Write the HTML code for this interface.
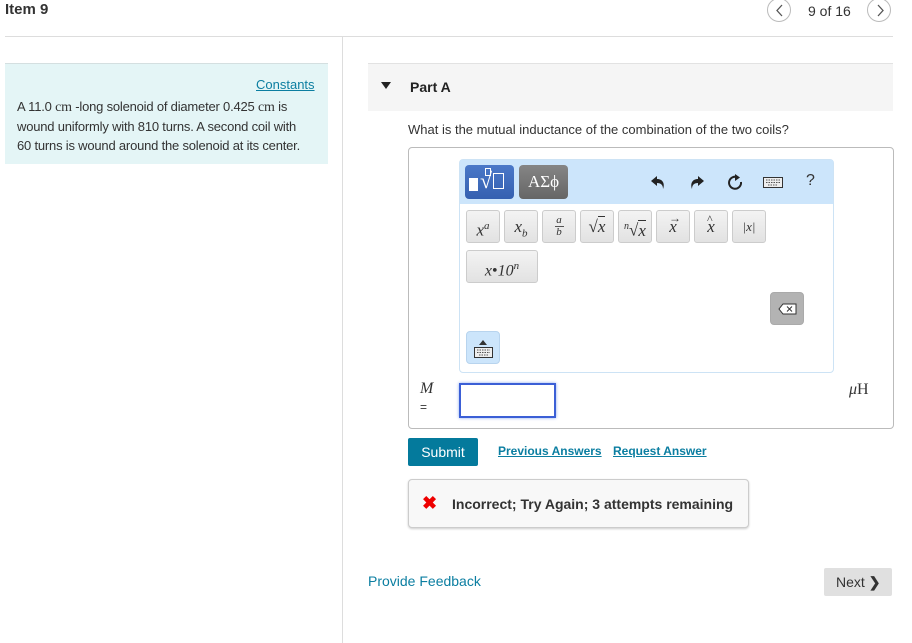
<!DOCTYPE html>
<html><head><style>
*{box-sizing:border-box;margin:0;padding:0}
body{width:912px;height:643px;background:#fff;font-family:"Liberation Sans",Arial,sans-serif;color:#222;position:relative;overflow:hidden;font-size:13px}
.a{position:absolute}
.circ{position:absolute;width:24px;height:24px;border:1px solid #bbb;border-radius:50%;top:-2px}
.tb{position:absolute;top:210px;width:34px;height:33px;background:linear-gradient(#f3f3f3,#e2e2e2);border:1px solid #ccc;border-radius:3px;font-family:"Liberation Serif",serif;font-style:italic;font-size:17px;text-align:center;line-height:31px;color:#333}
.ico{position:absolute;top:173px}
.link{color:#0b7ea1;text-decoration:underline;font-weight:bold;font-size:12px}
</style></head><body>
<div class="a" style="left:5px;top:1px;font-weight:bold;font-size:15px;color:#333">Item 9</div>
<div class="circ" style="left:767px"><svg class="a" style="left:7px;top:5px" width="9" height="13" viewBox="0 0 9 13"><path d="M7 1 L2 6.5 L7 12" fill="none" stroke="#555" stroke-width="1.3"/></svg></div>
<div class="a" style="left:808px;top:3px;font-size:14px;color:#333">9 of 16</div>
<div class="circ" style="left:867px"><svg class="a" style="left:8px;top:5px" width="9" height="13" viewBox="0 0 9 13"><path d="M2 1 L7 6.5 L2 12" fill="none" stroke="#555" stroke-width="1.3"/></svg></div>
<div class="a" style="left:5px;top:36px;width:888px;height:1px;background:#ddd"></div>
<div class="a" style="left:342px;top:37px;width:1px;height:606px;background:#ddd"></div>

<div class="a" style="left:5px;top:63px;width:323px;height:101px;background:#e4f5f6;border-top:1px solid #d4dfe0"></div>
<div class="a" style="left:256px;top:77px;color:#0b7ea1;text-decoration:underline;font-size:13px">Constants</div>
<div class="a" style="left:17px;top:97px;width:310px;line-height:19px;font-size:13px;color:#333;letter-spacing:-0.2px;white-space:nowrap">A 11.0 <span style="font-family:'Liberation Serif',serif;font-size:14px">cm</span> -long solenoid of diameter 0.425 <span style="font-family:'Liberation Serif',serif;font-size:14px">cm</span> is<br>wound uniformly with 810 turns. A second coil with<br>60 turns is wound around the solenoid at its center.</div>

<div class="a" style="left:368px;top:63px;width:525px;height:48px;background:#f5f5f5;border-top:1px solid #e2e2e2"></div>
<div class="a" style="left:381px;top:82px;width:0;height:0;border-left:5px solid transparent;border-right:5px solid transparent;border-top:7px solid #222"></div>
<div class="a" style="left:410px;top:79px;font-weight:bold;font-size:14px">Part A</div>
<div class="a" style="left:408px;top:122px;font-size:13px;color:#333">What is the mutual inductance of the combination of the two coils?</div>

<div class="a" style="left:408px;top:147px;width:486px;height:282px;border:1px solid #bbb;border-radius:4px"></div>
<div class="a" style="left:459px;top:159px;width:375px;height:214px;border:1px solid #cde3f5;border-radius:4px;background:#fff"></div>
<div class="a" style="left:460px;top:160px;width:373px;height:44px;background:#cce5fb"></div>
<div class="a" style="left:465px;top:165px;width:49px;height:34px;background:linear-gradient(#4a78c8,#3560b0);border-radius:4px;color:#fff">
<div class="a" style="left:4px;top:13px;width:9px;height:13px;background:#fff"></div>
<div class="a" style="left:15px;top:3px;font-family:'Liberation Serif',serif;font-size:22px">&#x221A;</div>
<div class="a" style="left:28px;top:8px;width:11px;height:16px;border:1.5px solid #fff"></div>
<div class="a" style="left:20px;top:3px;width:6px;height:8px;border:1.2px solid #fff"></div>
</div>
<div class="a" style="left:519px;top:165px;width:49px;height:34px;background:linear-gradient(#858585,#666);border-radius:4px;color:#fff;font-family:'Liberation Serif',serif;font-size:17px;text-align:center;line-height:33px">ΑΣϕ</div>
<svg class="ico" style="left:650px" width="16" height="18" viewBox="0 0 16 18"><path d="M7 3 L1 8 L7 13 V10 C11 10 13 12 13 16 C15 11 13 6 7 6 Z" fill="#222"/></svg>
<svg class="ico" style="left:689px" width="16" height="18" viewBox="0 0 16 18"><path d="M9 3 L15 8 L9 13 V10 C5 10 3 12 3 16 C1 11 3 6 9 6 Z" fill="#222"/></svg>
<svg class="ico" style="left:726px" width="18" height="18" viewBox="0 0 18 18"><path d="M12 4.5 A6 6 0 1 0 15 9" fill="none" stroke="#222" stroke-width="2"/><path d="M9 1 L14 4.5 L9 8 Z" fill="#222"/></svg>
<svg class="ico" style="left:763px;top:177px" width="20" height="11" viewBox="0 0 20 11"><rect x="0.5" y="0.5" width="19" height="10" fill="#eee" stroke="#333"/><path d="M3 3h14M3 5.5h14M5 8h10" stroke="#555" stroke-dasharray="1.5 1"/></svg>
<div class="a" style="left:806px;top:172px;font-size:16px;color:#333">?</div>

<div class="tb" style="left:466px">x<sup style="font-size:11px">a</sup></div>
<div class="tb" style="left:504px">x<sub style="font-size:11px">b</sub></div>
<div class="tb" style="left:542px;font-size:11px;line-height:11px;padding-top:4px">a<br><span style="display:inline-block;border-top:1px solid #555;width:9px">b</span></div>
<div class="tb" style="left:580px;font-style:normal">√<i style="border-top:1px solid #333;line-height:16px">x</i></div>
<div class="tb" style="left:618px;font-style:normal"><sup style="font-size:10px;font-style:italic">n</sup>√<i style="border-top:1px solid #333;line-height:16px">x</i></div>
<div class="tb" style="left:656px">x<span class="a" style="left:12px;top:-8px;font-style:normal;font-size:12px">&#x2192;</span></div>
<div class="tb" style="left:694px">x<span class="a" style="left:12px;top:-7px;font-style:normal;font-size:12px">^</span></div>
<div class="tb" style="left:732px;font-size:13px">|x|</div>
<div class="tb" style="left:466px;top:250px;width:72px;font-size:16px">x<span style="font-style:normal">•</span>10<sup style="font-size:11px">n</sup></div>
<div class="a" style="left:770px;top:292px;width:34px;height:33px;background:#b3b3b3;border-radius:4px;border:1px solid #aaa">
<svg class="a" style="left:7px;top:10px" width="19" height="12" viewBox="0 0 19 12"><path d="M5 1 H18 V11 H5 L1 6 Z" fill="#fff" stroke="#333"/><path d="M9 3.5 L14 8.5 M14 3.5 L9 8.5" stroke="#333"/></svg></div>
<div class="a" style="left:466px;top:331px;width:34px;height:33px;background:#cce5fb;border-radius:4px;border:1px solid #b8d4ee">
<div class="a" style="left:12px;top:8px;border-left:4px solid transparent;border-right:4px solid transparent;border-bottom:5px solid #333"></div>
<svg class="a" style="left:7px;top:15px" width="19" height="11" viewBox="0 0 19 11"><rect x="0.5" y="0.5" width="18" height="10" fill="#eee" stroke="#333"/><path d="M3 3h13M3 5.5h13M5 8h9" stroke="#555" stroke-dasharray="1.5 1"/></svg></div>

<div class="a" style="left:420px;top:380px;font-family:'Liberation Serif',serif;font-style:italic;font-size:16px;color:#333">M</div>
<div class="a" style="left:420px;top:400px;font-size:12px;color:#333">=</div>
<div class="a" style="left:459px;top:383px;width:97px;height:35px;border:2px solid #3b5fd6;box-shadow:0 0 3px #8aa8f0"></div>
<div class="a" style="left:849px;top:381px;font-family:'Liberation Serif',serif;font-size:16px;color:#333"><i>μ</i>H</div>

<div class="a" style="left:408px;top:438px;width:70px;height:28px;background:#047a9c;border-radius:2px;color:#fff;font-size:14px;text-align:center;line-height:28px">Submit</div>
<div class="a link" style="left:498px;top:444px">Previous Answers</div>
<div class="a link" style="left:613px;top:444px">Request Answer</div>

<div class="a" style="left:408px;top:479px;width:341px;height:49px;background:#f8f8f8;border:1px solid #ccc;border-radius:4px;box-shadow:0 1px 2px #ccc"></div>
<div class="a" style="left:422px;top:493px;color:#e00;font-size:18px;font-weight:bold">&#x2716;</div>
<div class="a" style="left:452px;top:496px;font-weight:bold;font-size:14px;color:#333">Incorrect; Try Again; 3 attempts remaining</div>

<div class="a" style="left:368px;top:573px;color:#0b7ea1;font-size:14px">Provide Feedback</div>
<div class="a" style="left:824px;top:568px;width:68px;height:28px;background:#e0e0e0;border-radius:2px;font-size:14px;line-height:28px;padding-left:12px;color:#333">Next <b>&#x276F;</b></div>
</body></html>
